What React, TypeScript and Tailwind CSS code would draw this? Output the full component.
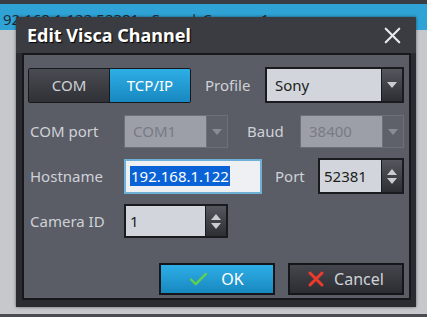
import { X } from 'lucide-react'

const font = { fontFamily: '"Noto Sans", "DejaVu Sans", sans-serif' }

function Arrow({ disabled }: { disabled?: boolean }) {
  return (
    <div
      className={
        'w-[21px] h-full flex items-center justify-center ' +
        (disabled
          ? 'bg-[#5f616a] border-l border-[#6e7078]'
          : 'bg-gradient-to-b from-[#55575e] to-[#2e2f34] border-l border-[#1a1b1e]')
      }
    >
      <svg width="10" height="6" viewBox="0 0 10 6">
        <path d="M0 0 L10 0 L5 6 Z" fill={disabled ? '#8a8c94' : '#c9ccd2'} />
      </svg>
    </div>
  )
}

function Spin() {
  return (
    <div className="w-[21px] h-full flex flex-col items-center justify-center gap-[3px] bg-gradient-to-b from-[#55575e] to-[#2e2f34] border-l border-[#1a1b1e]">
      <svg width="10" height="6" viewBox="0 0 10 6">
        <path d="M0 6 L10 6 L5 0 Z" fill="#c9ccd2" />
      </svg>
      <svg width="10" height="6" viewBox="0 0 10 6">
        <path d="M0 0 L10 0 L5 6 Z" fill="#c9ccd2" />
      </svg>
    </div>
  )
}

function Label({ text, className = '' }: { text: string; className?: string }) {
  return <span className={'text-[15px] text-[#cfd2d7] ' + className}>{text}</span>
}

export default function App() {
  return (
    <div className="relative w-[427px] h-[317px] overflow-hidden bg-[#c6c8cc] flex flex-col" style={font}>
      <div className="h-[4px] bg-[#3b3d44]" />
      <div className="h-[26px] bg-[#2fa3d6] flex items-start pt-[5px] pl-[3px] text-[15px] leading-[20px] text-[#1e2a33]">
        92.168.1.122:52381 - Sony | Camera 1
      </div>
      <div className="flex-1" />
      <div className="h-[3px] bg-[#4a4c52]" />

      <div className="absolute left-[16px] top-[17px] w-[400px] h-[290px] bg-[#2b2c31] flex flex-col shadow-[0_0_3px_rgba(0,0,0,0.5)]">
        <div className="h-[36px] bg-[#3b3c42] flex items-center justify-between pl-[11px] pr-[10px]">
          <span className="text-[18px] font-bold text-white [text-shadow:1px_1px_1px_#000]">Edit Visca Channel</span>
          <X size={27} strokeWidth={1.9} className="text-[#e8e9ec]" />
        </div>
        <div className="ml-[6px] mr-[5px] mb-[7px] flex-1 border-2 border-[#17181b] bg-[#5a5c66] pt-[12px] pl-[4px] pr-[5px] flex flex-col">
          {/* row 1 */}
          <div className="flex items-center h-[36px]">
            <div className="flex h-[35px] w-[163px] border border-[#17181b] rounded-[2px] overflow-hidden">
              <div className="flex-1 flex items-center justify-center bg-gradient-to-b from-[#4a4c53] to-[#303136] text-[15px] text-[#cfd2d7]">
                COM
              </div>
              <div className="flex-1 flex items-center justify-center bg-gradient-to-b from-[#2eaee6] to-[#1888c0] text-[15px] text-white border-l border-[#17181b]">
                TCP/IP
              </div>
            </div>
            <Label text="Profile" className="ml-[14px] w-[60px]" />
            <div className="flex h-[36px] w-[139px] border-2 border-[#1a1b1e]">
              <div className="flex-1 bg-[#d2d5db] flex items-center pl-[8px] text-[15px] text-[#1c1d20]">Sony</div>
              <Arrow />
            </div>
          </div>

          {/* row 2 */}
          <div className="flex items-center h-[33px] mt-[12px]">
            <Label text="COM port" className="w-[96px] pl-[2px]" />
            <div className="flex h-[33px] w-[104px] border border-[#6e7078]">
              <div className="flex-1 bg-[#9c9fa7] flex items-center pl-[8px] text-[15px] text-[#787b83]">COM1</div>
              <Arrow disabled />
            </div>
            <Label text="Baud" className="ml-[19px] w-[53px]" />
            <div className="flex h-[33px] w-[104px] border border-[#6e7078]">
              <div className="flex-1 bg-[#9c9fa7] flex items-center pl-[8px] text-[15px] text-[#787b83]">38400</div>
              <Arrow disabled />
            </div>
          </div>

          {/* row 3 */}
          <div className="flex items-center h-[36px] mt-[10px]">
            <Label text="Hostname" className="w-[96px] pl-[2px]" />
            <div className="h-[35px] w-[138px] border-2 border-[#6fb0d6] bg-[#eef0f3] flex items-center pl-[4px]">
              <span className="bg-[#0a63d6] text-white text-[15px] leading-[20px] px-[1px]">192.168.1.122</span>
            </div>
            <Label text="Port" className="ml-[13px] w-[43px]" />
            <div className="flex h-[36px] w-[86px] border-2 border-[#1a1b1e]">
              <div className="flex-1 bg-[#d2d5db] flex items-center pl-[4px] text-[15px] text-[#1c1d20]">52381</div>
              <Spin />
            </div>
          </div>

          {/* row 4 */}
          <div className="flex items-center h-[34px] mt-[10px]">
            <Label text="Camera ID" className="w-[96px] pl-[2px]" />
            <div className="flex h-[34px] w-[104px] border-2 border-[#1a1b1e]">
              <div className="flex-1 bg-[#d2d5db] flex items-center pl-[4px] text-[15px] text-[#1c1d20]">1</div>
              <Spin />
            </div>
          </div>

          {/* buttons */}
          <div className="flex justify-end gap-[13px] mt-[25px]">
            <div className="w-[116px] h-[32px] border-2 border-[#14161a] bg-gradient-to-b from-[#2eaee6] to-[#1888c0] flex items-center justify-center gap-[14px]">
              <svg width="17" height="13" viewBox="0 0 18 14">
                <path d="M1 7 L6 12 L17 1" fill="none" stroke="#5fd04a" strokeWidth="2.6" strokeLinecap="round" strokeLinejoin="round" />
              </svg>
              <span className="text-[16px] text-white">OK</span>
            </div>
            <div className="w-[116px] h-[32px] border-2 border-[#14161a] bg-gradient-to-b from-[#45474e] to-[#2c2d32] flex items-center justify-center gap-[10px]">
              <svg width="16" height="16" viewBox="0 0 16 16">
                <path d="M2 2 L14 14 M14 2 L2 14" stroke="#ee3a2a" strokeWidth="3" strokeLinecap="round" />
              </svg>
              <span className="text-[16px] text-[#cfd2d7]">Cancel</span>
            </div>
          </div>
        </div>
      </div>
    </div>
  )
}
